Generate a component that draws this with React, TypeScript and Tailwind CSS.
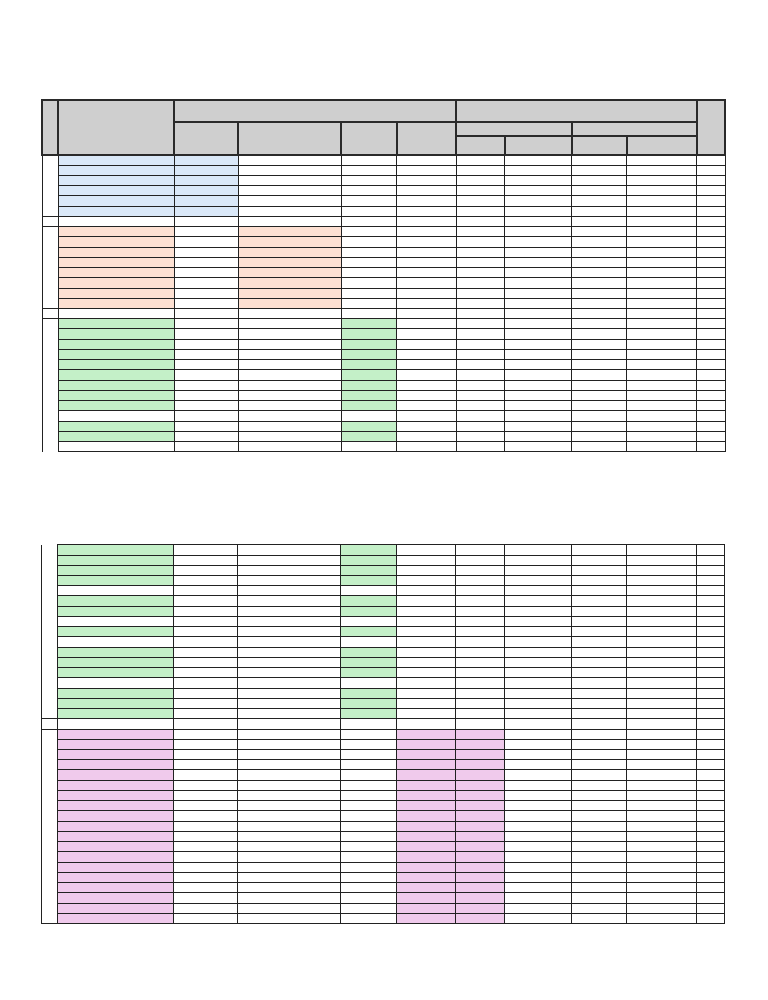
import React from 'react';

type Fill = 'blue' | 'peach' | 'green' | 'pink';

type Section =
  | { kind: 'group'; fill: Fill; pattern: number[]; openTop?: boolean; openBottom?: boolean }
  | { kind: 'sep' };

const fillCols: Record<Fill, number[]> = {
  blue: [1, 2],
  peach: [1, 3],
  green: [1, 4],
  pink: [1, 5, 6],
};

const fillBg: Record<Fill, string> = {
  blue: 'bg-[#dae8f8]',
  peach: 'bg-[#fde0d2]',
  green: 'bg-[#c4f0c8]',
  pink: 'bg-[#f0caec]',
};

const ones = (n: number) => Array.from({ length: n }, () => 1);

const firstPage: Section[] = [
  { kind: 'group', fill: 'blue', pattern: ones(6) },
  { kind: 'sep' },
  { kind: 'group', fill: 'peach', pattern: ones(8) },
  { kind: 'sep' },
  { kind: 'group', fill: 'green', pattern: [1, 1, 1, 1, 1, 1, 1, 1, 1, 0, 1, 1, 0], openBottom: true },
];

const secondPage: Section[] = [
  { kind: 'group', fill: 'green', pattern: [1, 1, 1, 1, 0, 1, 1, 0, 1, 0, 1, 1, 1, 0, 1, 1, 1], openTop: true },
  { kind: 'sep' },
  { kind: 'group', fill: 'pink', pattern: ones(19) },
];

const cell = 'p-0 h-[10.24px] border border-[#222]';
const head = 'p-0 border-2 border-[#2a2a2a] bg-[#cfcfcf]';

const Cols = () => (
  <colgroup>
    <col className="w-[16px]" />
    <col className="w-[116px]" />
    <col className="w-[64px]" />
    <col className="w-[103px]" />
    <col className="w-[55.5px]" />
    <col className="w-[59.5px]" />
    <col className="w-[48.5px]" />
    <col className="w-[67px]" />
    <col className="w-[55px]" />
    <col className="w-[70px]" />
    <col className="w-[28.5px]" />
  </colgroup>
);

const BodyRows = ({ sections }: { sections: Section[] }) => (
  <>
    {sections.map((s, si) => {
      if (s.kind === 'sep') {
        return (
          <tr key={si}>
            {Array.from({ length: 11 }, (_, c) => (
              <td key={c} className={cell} />
            ))}
          </tr>
        );
      }
      return s.pattern.map((on, ri) => (
        <tr key={`${si}-${ri}`}>
          {ri === 0 && (
            <td
              rowSpan={s.pattern.length}
              className={`p-0 border border-[#222] ${s.openTop ? 'border-t-0' : ''} ${s.openBottom ? 'border-b-0' : ''}`}
            />
          )}
          {Array.from({ length: 10 }, (_, i) => {
            const c = i + 1;
            const filled = on === 1 && fillCols[s.fill].includes(c);
            return <td key={c} className={`${cell} ${filled ? fillBg[s.fill] : 'bg-white'}`} />;
          })}
        </tr>
      ));
    })}
  </>
);

const Sheet = ({ sections, header }: { sections: Section[]; header: boolean }) => (
  <table className="table-fixed border-collapse w-[683px]">
    <Cols />
    <tbody>
      {header && (
        <>
          <tr className="h-[22px]">
            <td rowSpan={3} className={head} />
            <td rowSpan={3} className={head} />
            <td colSpan={4} className={head} />
            <td colSpan={4} className={head} />
            <td rowSpan={3} className={head} />
          </tr>
          <tr className="h-[14px]">
            <td rowSpan={2} className={head} />
            <td rowSpan={2} className={head} />
            <td rowSpan={2} className={head} />
            <td rowSpan={2} className={head} />
            <td colSpan={2} className={head} />
            <td colSpan={2} className={head} />
          </tr>
          <tr className="h-[19px]">
            <td className={head} />
            <td className={head} />
            <td className={head} />
            <td className={head} />
          </tr>
        </>
      )}
      <BodyRows sections={sections} />
    </tbody>
  </table>
);

export default function App() {
  return (
    <div className="min-h-screen bg-white pt-[99px] pl-[41px]">
      <Sheet sections={firstPage} header />
      <div className="mt-[92px]">
        <Sheet sections={secondPage} header={false} />
      </div>
    </div>
  );
}
